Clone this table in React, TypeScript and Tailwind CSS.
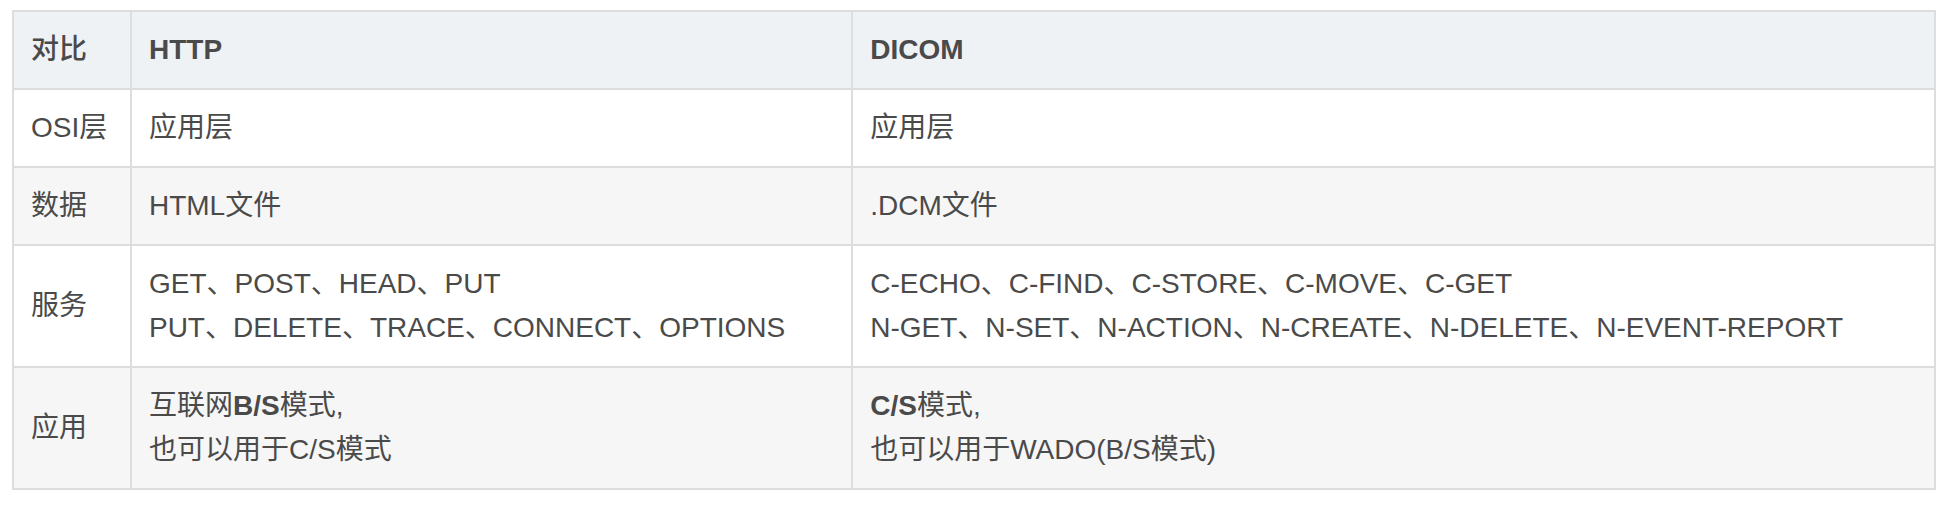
import React from 'react'

const rows = [
  { label: 'OSI层', http: ['应用层'], dicom: ['应用层'] },
  { label: '数据', http: ['HTML文件'], dicom: ['.DCM文件'] },
  {
    label: '服务',
    http: ['GET、POST、HEAD、PUT', 'PUT、DELETE、TRACE、CONNECT、OPTIONS'],
    dicom: [
      'C-ECHO、C-FIND、C-STORE、C-MOVE、C-GET',
      'N-GET、N-SET、N-ACTION、N-CREATE、N-DELETE、N-EVENT-REPORT',
    ],
  },
]

const cell = 'border-r-2 border-b-2 border-[#dddddd] px-[17px] py-4 align-middle text-left'

const App = () => {
  return (
    <div className="bg-white w-[1954px] h-[508px] pt-[10px] pl-[12px]">
      <table
        className="w-[1924px] border-separate border-spacing-0 border-l-2 border-t-2 border-[#dddddd] text-[28px] leading-[44px] text-[#4a4a4a] font-['Liberation_Sans','Noto_Sans_CJK_SC',sans-serif]"
      >
        <thead>
          <tr className="bg-[#eff2f5]">
            <th className={`${cell} w-[118px] font-medium`}>对比</th>
            <th className={`${cell} w-[722px] font-bold`}>HTTP</th>
            <th className={`${cell} w-[1084px] font-bold`}>DICOM</th>
          </tr>
        </thead>
        <tbody>
          {rows.map((r, i) => (
            <tr key={r.label} className={i % 2 === 1 ? 'bg-[#f6f6f6]' : 'bg-white'}>
              <td className={cell}>{r.label}</td>
              <td className={cell}>
                {r.http.map((line) => (
                  <div key={line}>{line}</div>
                ))}
              </td>
              <td className={cell}>
                {r.dicom.map((line) => (
                  <div key={line}>{line}</div>
                ))}
              </td>
            </tr>
          ))}
          <tr className="bg-[#f6f6f6]">
            <td className={cell}>应用</td>
            <td className={cell}>
              <div>
                互联网<strong className="font-bold">B/S</strong>模式,
              </div>
              <div>也可以用于C/S模式</div>
            </td>
            <td className={cell}>
              <div>
                <strong className="font-bold">C/S</strong>模式,
              </div>
              <div>也可以用于WADO(B/S模式)</div>
            </td>
          </tr>
        </tbody>
      </table>
    </div>
  )
}

export default App
